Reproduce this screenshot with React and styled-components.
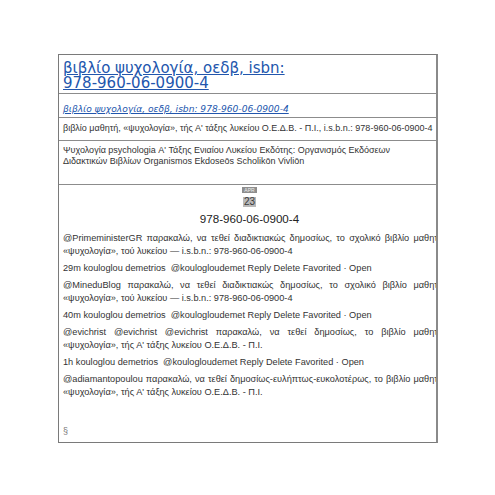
import React from "react";
import styled, { createGlobalStyle } from "styled-components";

const GlobalStyle = createGlobalStyle`
  html, body {
    margin: 0;
    padding: 0;
    background: #ffffff;
  }
`;

const Page = styled.div`
  padding: 54px 0 0 58px;
  width: 495px;
  height: 495px;
  box-sizing: border-box;
`;

const Sheet = styled.div`
  width: 380px;
  height: 389px;
  box-sizing: border-box;
  border: 1px solid #7a7a7a;
  border-right: 2px solid #8a8a8a;
  display: flex;
  flex-direction: column;
  overflow: hidden;
`;

const Row = styled.div`
  height: ${(p) => p.$h}px;
  flex: none;
  box-sizing: border-box;
  border-bottom: ${(p) => (p.$last ? "none" : "1px solid #8c8c8c")};
  padding: ${(p) => p.$pad || "4px 0 0 4px"};
  overflow: hidden;
`;

const Title = styled.a`
  display: block;
  font-family: "DejaVu Sans", Verdana, sans-serif;
  font-size: 15px;
  line-height: 15px;
  color: #2256ad;
  text-decoration: underline;
  width: 245px;
`;

const SubTitle = styled.a`
  font-family: "DejaVu Sans", Verdana, sans-serif;
  font-style: italic;
  font-size: 9.1px;
  color: #2256ad;
  text-decoration: underline;
  white-space: nowrap;
`;

const Plain = styled.div`
  font-family: "Liberation Sans", Arial, sans-serif;
  font-size: 9px;
  line-height: ${(p) => p.$lh || 11}px;
  color: #333333;
  white-space: ${(p) => (p.$nowrap ? "nowrap" : "normal")};
  width: ${(p) => p.$w || "auto"};
`;

const Feed = styled.div`
  display: flex;
  flex-direction: column;
  height: 100%;
`;

const DateBox = styled.div`
  display: flex;
  flex-direction: column;
  align-items: center;
  gap: 4px;
`;

const Month = styled.span`
  font-family: "Liberation Sans", Arial, sans-serif;
  font-size: 5px;
  line-height: 6px;
  padding: 0 2px;
  background: #8e8e8e;
  color: #f2f2f2;
`;

const Day = styled.span`
  font-family: "Liberation Sans", Arial, sans-serif;
  font-size: 10px;
  line-height: 10px;
  padding: 0 1px;
  background: #b9b9b9;
  color: #3a3a3a;
`;

const Isbn = styled.div`
  font-family: "Liberation Sans", Arial, sans-serif;
  font-size: 11.6px;
  line-height: 14px;
  color: #222222;
  text-align: center;
  margin: 5px 0 6px;
`;

const Tweet = styled.p`
  margin: 0 0 4px;
  font-family: "Liberation Sans", Arial, sans-serif;
  font-size: 9.2px;
  line-height: 13px;
  color: #333333;
  text-align: justify;
  width: 380px;
`;

const Meta = styled(Tweet)`
  text-align: left;
  white-space: nowrap;
`;

const Section = styled.div`
  margin-top: auto;
  margin-bottom: 6px;
  font-family: "Liberation Sans", Arial, sans-serif;
  font-size: 9px;
  color: #777777;
`;

const tweets = [
  {
    text: "@PrimeministerGR παρακαλώ, να τεθεί διαδικτιακώς δημοσίως, το σχολικό βιβλίο μαθητή «ψυχολογία», τού λυκείου — i.s.b.n.: 978-960-06-0900-4",
    ago: "29m",
  },
  {
    text: "@MineduBlog παρακαλώ, να τεθεί διαδικτιακώς δημοσίως, το σχολικό βιβλίο μαθητή «ψυχολογία», τού λυκείου — i.s.b.n.: 978-960-06-0900-4",
    ago: "40m",
  },
  {
    text: "@evichrist @evichrist @evichrist παρακαλώ, να τεθεί δημοσίως, το βιβλίο μαθητή «ψυχολογία», τής Α' τάξης λυκείου Ο.Ε.Δ.Β. - Π.Ι.",
    ago: "1h",
  },
  {
    text: "@adiamantopoulou παρακαλώ, να τεθεί δημοσίως-ευλήπτως-ευκολοτέρως, το βιβλίο μαθητή «ψυχολογία», τής Α' τάξης λυκείου Ο.Ε.Δ.Β. - Π.Ι.",
  },
];

export default function App() {
  return (
    <>
      <GlobalStyle />
      <Page>
        <Sheet>
          <Row $h={39} $pad="6px 0 0 4px">
            <Title href="#">βιβλίο ψυχολογία, οεδβ, isbn: 978-960-06-0900-4</Title>
          </Row>
          <Row $h={24} $pad="4px 0 0 4px">
            <SubTitle href="#">βιβλίο ψυχολογία, οεδβ, isbn: 978-960-06-0900-4</SubTitle>
          </Row>
          <Row $h={23} $pad="5px 0 0 4px">
            <Plain $nowrap>
              βιβλίο μαθητή, «ψυχολογία», τής Α' τάξης λυκείου Ο.Ε.Δ.Β. - Π.Ι., i.s.b.n.: 978-960-06-0900-4
            </Plain>
          </Row>
          <Row $h={44} $pad="4px 0 0 4px">
            <Plain $w="350px">
              Ψυχολογία psychologia Α' Τάξης Ενιαίου Λυκείου Εκδότης: Οργανισμός Εκδόσεων Διδακτικών Βιβλίων Organismos Ekdoseōs Scholikōn Vivliōn
            </Plain>
          </Row>
          <Row $h={257} $last $pad="2px 0 0 4px">
            <Feed>
              <DateBox>
                <Month>APR</Month>
                <Day>23</Day>
              </DateBox>
              <Isbn>978-960-06-0900-4</Isbn>
              {tweets.map((t, i) => (
                <React.Fragment key={i}>
                  <Tweet>{t.text}</Tweet>
                  {t.ago && (
                    <Meta>
                      {t.ago} kouloglou demetrios&nbsp; @koulogloudemet Reply Delete Favorited · Open
                    </Meta>
                  )}
                </React.Fragment>
              ))}
              <Section>§</Section>
            </Feed>
          </Row>
        </Sheet>
      </Page>
    </>
  );
}
